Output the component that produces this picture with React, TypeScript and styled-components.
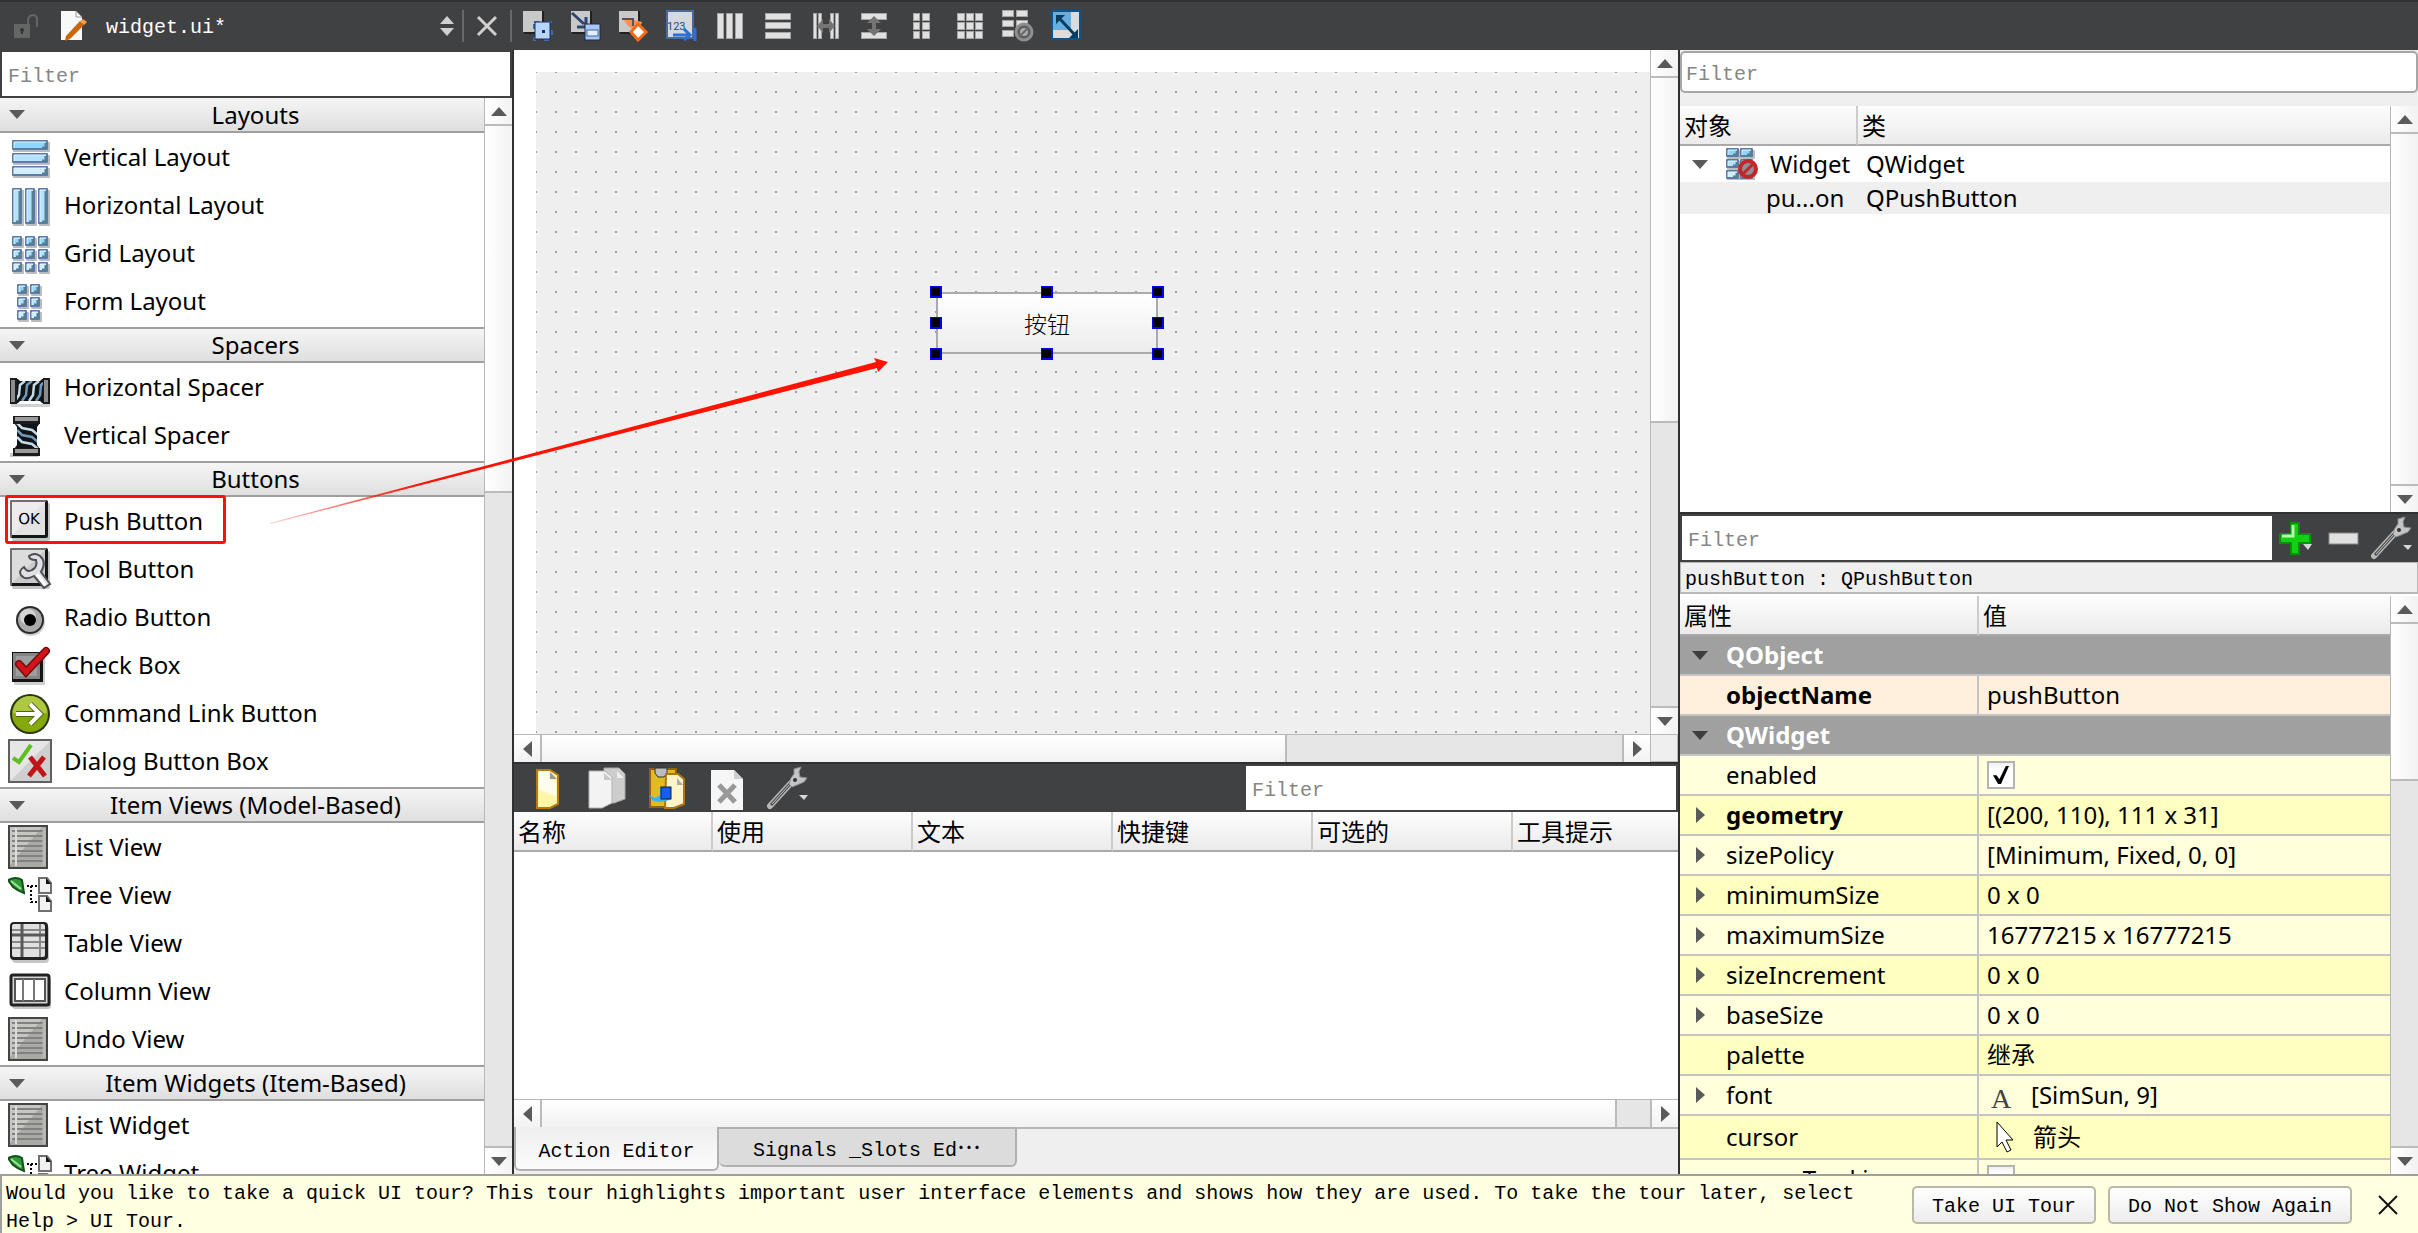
import React from "react";
import styled, { createGlobalStyle, css } from "styled-components";

const UI = `"Noto Sans", "Noto Sans CJK SC", sans-serif`;
const MONO = `"Liberation Mono", "Noto Sans CJK SC", monospace`;
const DARK = "#404142";
const DARKER = "#2f3031";

const Global = createGlobalStyle`
  *, *::before, *::after { box-sizing: border-box; }
  body { margin: 0; background: #efefef; overflow: hidden; }
  button, input, select { font: inherit; color: inherit; margin: 0; padding: 0; border: 0; border-radius: 0; background: none; }
  svg { display: block; flex: none; }
`;

const Page = styled.div`
  position: relative;
  display: grid;
  grid-template-rows: 50px minmax(0, 1fr) auto;
  height: 100vh;
  font: 24px/32px ${UI};
  color: #000;
`;

/* ---------- top bar ---------- */
const TopBar = styled.header`
  display: flex;
  background: ${DARK};
  border-top: 2px solid ${DARKER};
`;
const DocBar = styled.div`
  display: flex;
  align-items: center;
  width: 512px;
  padding-left: 12px;
  gap: 8px;
`;
const DocSelect = styled.select`
  appearance: none;
  flex: 1;
  padding: 4px 0 0 8px;
  font: 20px/28px ${MONO};
  color: #fff;
`;
const BarButton = styled.button`
  display: grid;
  place-items: center;
  min-height: 32px;
`;
const CloseBox = styled(BarButton)`
  width: 50px;
  border-left: 2px solid #68696a;
  border-right: 2px solid #68696a;
`;
const Tools = styled.nav`
  display: flex;
  align-items: center;
  gap: 16px;
  padding-left: 10px;
`;

/* ---------- shared ---------- */
const Workspace = styled.main`
  display: grid;
  grid-template-columns: 512px minmax(0, 1fr) 738px;
  grid-template-rows: minmax(0, 1fr);
  gap: 2px;
  min-height: 0;
  overflow: hidden;
  background: ${DARKER};
`;
const Filter = styled.input`
  display: block;
  width: 100%;
  height: 44px;
  padding: 4px 6px 0;
  background: #fff;
  font: 20px/28px ${MONO};
  &::placeholder { color: #858585; opacity: 1; }
`;
const BarFrame = styled.div<{ $v?: boolean }>`
  display: flex;
  flex: none;
  background: #e6e6e6;
  ${(p) =>
    p.$v
      ? css`flex-direction: column; width: 28px; border-left: 1px solid #b8b8b8;`
      : css`height: 28px; border-top: 1px solid #b8b8b8;`}
`;
const BarEnd = styled.button<{ $v?: boolean; $last?: boolean }>`
  display: grid;
  place-items: center;
  flex: none;
  ${(p) => (p.$v ? "height: 28px;" : "width: 28px;")}
  background: linear-gradient(${(p) => (p.$v ? "to right" : "to bottom")}, #fff, #f2f2f2);
  border: 0 solid #bbb;
  ${(p) =>
    p.$v
      ? p.$last ? "border-top-width: 2px;" : "border-bottom-width: 2px;"
      : p.$last ? "border-left-width: 2px;" : "border-right-width: 2px;"}
`;
const Thumb = styled.div<{ $v?: boolean; $size: number }>`
  flex: 0 1 ${(p) => p.$size}%;
  background: linear-gradient(${(p) => (p.$v ? "to right" : "to bottom")}, #fff, #f2f2f2);
  border: 0 solid #bbb;
  ${(p) => p.$size < 100 && (p.$v ? "border-bottom-width: 2px;" : "border-right-width: 2px;")}
`;
const Track = styled.div<{ $v?: boolean }>`
  display: flex;
  flex: 1;
  min-height: 0;
  flex-direction: ${(p) => (p.$v ? "column" : "row")};
`;

const tri = { up: "0,9 8,0 16,9", down: "0,0 16,0 8,9", left: "9,0 9,16 0,8", right: "0,0 9,8 0,16" };
const Tri = ({ d, c = "#5a5a5a" }: { d: keyof typeof tri; c?: string }) => {
  const flat = d === "up" || d === "down";
  return (
    <svg width={flat ? 16 : 9} height={flat ? 9 : 16} aria-hidden="true">
      <polygon points={tri[d]} fill={c} />
    </svg>
  );
};
const ScrollBar = ({ v, size }: { v?: boolean; size: number }) => (
  <BarFrame $v={v}>
    <BarEnd $v={v} aria-label="Scroll back"><Tri d={v ? "up" : "left"} /></BarEnd>
    <Track $v={v}><Thumb $v={v} $size={size} /></Track>
    <BarEnd $v={v} $last aria-label="Scroll forward"><Tri d={v ? "down" : "right"} /></BarEnd>
  </BarFrame>
);

/* ---------- widget box ---------- */
const Column = styled.section`
  display: flex;
  flex-direction: column;
  min-width: 0;
  min-height: 0;
  overflow: hidden;
  background: #fff;
`;
const FilterFrame = styled.div`
  padding: 2px;
  background: ${DARK};
`;
const Split = styled.div`
  display: flex;
  flex: 1;
  min-height: 0;
`;
const BoxList = styled.div`
  flex: 1;
  min-width: 0;
  overflow: hidden;
`;
const Group = styled.div`
  padding-bottom: 2px;
`;
const GroupHead = styled.button<{ $first?: boolean }>`
  display: grid;
  grid-template-columns: 18px 1fr;
  align-items: center;
  width: 100%;
  height: ${(p) => (p.$first ? 35 : 36)}px;
  padding: 0 0 0 9px;
  border: solid #9f9f9f;
  border-width: ${(p) => (p.$first ? 0 : 2)}px 0 2px;
  background: linear-gradient(#f5f5f5, #dfdfdf);
  line-height: 28px;
`;
const BoxItem = styled.button<{ $marked?: boolean }>`
  position: relative;
  display: flex;
  align-items: center;
  gap: 12px;
  width: 100%;
  height: 48px;
  padding-left: 8px;
  text-align: left;
  ${(p) =>
    p.$marked &&
    css`
      &::after {
        content: "";
        position: absolute;
        left: 5px;
        top: -2px;
        width: 221px;
        height: 49px;
        border: 3px solid #ff1200;
        border-radius: 3px;
      }
    `}
`;

/* ---------- form canvas ---------- */
const Centre = styled.div`
  display: grid;
  grid-template-rows: minmax(0, 712fr) minmax(0, 412fr);
  min-width: 0;
  min-height: 0;
`;
const Canvas = styled.div`
  flex: 1;
  min-width: 0;
  padding: 22px 0 0 22px;
  background: #fff;
`;
const Form = styled.div`
  position: relative;
  height: 100%;
  background: conic-gradient(at 2px 2px, transparent 270deg, #9f9f9f 0) -1px -1px / 20px 20px #efefef;
`;
const Selected = styled.div`
  position: absolute;
  left: 400px;
  top: 220px;
  width: 222px;
  height: 62px;
`;
const FormButton = styled.button`
  width: 100%;
  height: 100%;
  border: 2px solid #aaa;
  background: linear-gradient(#fff, #ededed);
  font: 300 23px/32px "Noto Sans CJK SC", sans-serif;
`;
const Grip = styled.i<{ $x: number; $y: number }>`
  position: absolute;
  left: ${(p) => p.$x}%;
  top: ${(p) => p.$y}%;
  width: 12px;
  height: 12px;
  margin: -6px;
  background: #000;
  border: 2px solid #00f;
  border-width: 1px 2px 2px 1px;
`;
const CanvasFoot = styled.div`
  display: flex;
  flex: none;
`;
const Corner = styled.div`
  width: 28px;
  border: 1px solid #b8b8b8;
  background: #efefef;
`;
const Grow = styled.div`
  flex: 1;
  min-width: 0;
  min-height: 0;
  overflow: hidden;
`;

/* ---------- action editor ---------- */
const DarkBar = styled.div`
  display: flex;
  align-items: center;
  height: 50px;
  flex: none;
  padding: 0 2px;
  border-top: 2px solid ${DARKER};
  background: ${DARK};
`;
const ActionTools = styled.div`
  display: flex;
  flex: 1;
  gap: 16px;
  padding-left: 10px;
`;
const FilterSlot = styled.div<{ $w?: number }>`
  ${(p) => (p.$w ? `width: ${p.$w}px;` : "flex: 1;")}
`;
const Grid = styled.table`
  width: 100%;
  table-layout: fixed;
  border-collapse: separate;
  border-spacing: 0;
`;
const Th = styled.th<{ $w?: number }>`
  ${(p) => p.$w && `width: ${p.$w}px;`}
  height: 40px;
  padding: 2px 0 0 4px;
  overflow: hidden;
  text-align: left;
  font-weight: 400;
  white-space: nowrap;
  background: linear-gradient(#fdfdfd, #ebebeb);
  border-bottom: 2px solid #aaa;
  border-right: 2px solid #ccc;
  &:last-child { border-right: 0; }
`;
const Tabs = styled.div`
  display: flex;
  align-items: flex-start;
  height: 47px;
  flex: none;
  background: #efefef;
`;
const TabRest = styled.div`
  flex: 1;
  height: 2px;
  background: #b8b8b8;
`;
const Tab = styled.button<{ $on?: boolean }>`
  height: ${(p) => (p.$on ? 44 : 40)}px;
  width: ${(p) => (p.$on ? 205 : 298)}px;
  padding-top: ${(p) => (p.$on ? 8 : 4)}px;
  border: 2px solid #b0b0b0;
  border-top-width: ${(p) => (p.$on ? 0 : 2)}px;
  border-left-width: ${(p) => (p.$on ? 2 : 0)}px;
  border-radius: 0 0 6px 6px;
  background: ${(p) => (p.$on ? "linear-gradient(#efefef, #fbfbfb)" : "#dcdcdc")};
  font: 20px/28px ${MONO};
  white-space: nowrap;
`;
const Dots = styled.span`
  font: 24px/24px "Noto Sans CJK SC", sans-serif;
`;

/* ---------- right side ---------- */
const Right = styled.div`
  display: grid;
  grid-template-rows: minmax(0, 462fr) minmax(0, 662fr);
  min-width: 0;
  min-height: 0;
`;
const InspectorFilter = styled.div`
  padding: 1px 0 13px;
  background: #efefef;
  ${Filter} {
    height: 42px;
    padding: 4px 4px 0;
    border: 2px solid #a6a6a6;
    border-radius: 5px;
  }
`;
const TreeCell = styled.td<{ $shade?: boolean; $tall?: boolean }>`
  height: ${(p) => (p.$tall ? 36 : 32)}px;
  padding: 0 0 0 8px;
  background: ${(p) => (p.$shade ? "#efefef" : "#fff")};
  white-space: nowrap;
`;
const TreeNode = styled.div<{ $indent: number }>`
  display: flex;
  align-items: center;
  gap: 12px;
  height: 32px;
  padding-left: ${(p) => p.$indent}px;
  svg + svg { margin-left: 6px; }
`;
const ObjectLabel = styled.div`
  height: 32px;
  flex: none;
  margin-bottom: 2px;
  padding: 4px 0 0 4px;
  border: 1px solid #b8b8b8;
  border-bottom-width: 2px;
  background: #efefef;
  font: 20px/26px ${MONO};
`;
const PropRow = styled.tr<{ $bg: string; $group?: boolean; $tall?: boolean }>`
  height: ${(p) => (p.$tall ? 44 : 40)}px;
  background: ${(p) => p.$bg};
  color: ${(p) => (p.$group ? "#fff" : "#000")};
  td, th {
    padding: 0 0 0 8px;
    border-bottom: 2px solid #c4c4c4;
    text-align: left;
    white-space: nowrap;
  }
`;
const NameCell = styled.th<{ $bold?: boolean; $group?: boolean }>`
  font-weight: ${(p) => (p.$bold ? 700 : 400)};
  border-right: ${(p) => (p.$group ? "0" : "2px solid #c4c4c4")};
`;
const NameLine = styled.div`
  display: grid;
  grid-template-columns: 38px 1fr;
  align-items: center;
  svg { margin-left: 8px; }
  svg[width="16"] { margin-left: 4px; }
`;
const ValueLine = styled.div`
  display: flex;
  align-items: center;
  gap: 16px;
`;
const Check = styled.input`
  appearance: none;
  position: relative;
  width: 28px;
  height: 28px;
  border: 2px solid #b4b4b4;
  background: linear-gradient(#f0f0f0, #fff 6px);
  &:checked::after {
    content: "";
    position: absolute;
    inset: 3px 4px;
    background: #000;
    clip-path: polygon(0 52%, 22% 52%, 40% 74%, 80% 0, 100% 0, 50% 100%, 32% 100%);
  }
`;

/* ---------- tour bar ---------- */
const TourBar = styled.footer`
  display: flex;
  align-items: flex-start;
  height: 59px;
  padding: 0 4px;
  border-top: 2px solid #9f9f9f;
  border-left: 2px solid #9f9f9f;
  background: #ffffe1;
  font: 20px/28px ${MONO};
`;
const TourText = styled.p`
  flex: 1;
  margin: 0;
  padding-top: 4px;
  line-height: 28px;
`;
const TourButtons = styled.div`
  display: flex;
  align-items: center;
  gap: 12px;
  padding: 10px 12px 0 12px;
`;
const TourButton = styled.button`
  height: 38px;
  padding: 4px 18px 0;
  border: 2px solid #b9b9a8;
  border-radius: 5px;
  background: linear-gradient(#fff, #ededed);
`;
const TourClose = styled.button`
  display: grid;
  place-items: center;
  width: 28px;
  height: 38px;
  margin-left: 10px;
`;
const Pointer = styled.svg`
  position: absolute;
  left: 270px;
  top: 354px;
  pointer-events: none;
`;

/* ---------- icons ---------- */
const Box = ({ s = 44, children }: { s?: number; children: React.ReactNode }) => (
  <svg width={s} height={s} viewBox={`0 0 ${s} ${s}`} aria-hidden="true">{children}</svg>
);
const blues = ["#8fd6ff", "#b3e2ff", "#d2eeff"];
const Blue = ({ x, y, w, h, k }: { x: number; y: number; w: number; h: number; k: number }) => (
  <>
    <rect x={x + 1} y={y + 2} width={w + 1} height={h} rx="1" fill="#b9bcc0" />
    <rect x={x} y={y} width={w} height={h} rx="1" fill="#5d7ba3" />
    <rect x={x + 2} y={y + 2} width={w - 4} height={h - 4} fill={blues[k]} />
    <path d={`M${x + 2} ${y + h - 2}V${y + 2}H${x + w - 2}`} fill="none" stroke="#e2f6ff" />
    <path d={`M${x + w - 2.5} ${y + 3}V${y + h - 2.5}H${x + w - 6}`} fill="none" stroke="#56808f" strokeWidth="2" />
  </>
);
const at = [4, 17, 30];
const VLay = () => <Box>{at.map((p, i) => <Blue key={p} x={4} y={p + 1} w={36} h={10} k={i} />)}</Box>;
const HLay = () => <Box>{at.map((p) => <Blue key={p} x={p} y={5} w={10} h={36} k={1} />)}</Box>;
const GLay = () => <Box>{at.map((y, i) => at.map((x) => <Blue key={x + "-" + y} x={x} y={y + 1} w={10} h={10} k={i} />))}</Box>;
const FLay = () => <Box>{at.map((y, i) => [9, 22].map((x) => <Blue key={x + "-" + y} x={x} y={y + 1} w={10} h={10} k={i} />))}</Box>;
const HSpring = () => (
  <Box>
    <rect x="3" y="38" width="39" height="4" fill="#d0d0d0" />
    <path d="M8 14H36V38H8Z" fill="#101418" />
    {[0, 7, 14, 21].map((d) => <path key={d} d={`M${7 + d} 36L${11 + d} 30L${12 + d} 20L${17 + d} 16`} stroke={d % 2 ? "#6f9ab8" : "#c4dbe8"} strokeWidth="2.5" fill="none" />)}
    <path d="M9 13H35L32 16H12ZM9 39H35L32 36H12Z" fill="#fff" />
    {[2, 35].map((x) => <g key={x}><rect x={x} y="13" width="7" height="26" fill="#1c1c1c" /><rect x={x + 1} y="15" width="4" height="22" fill="#8c8c8c" /></g>)}
  </Box>
);
const VSpring = () => (
  <Box>
    <rect x="2" y="40" width="28" height="4" fill="#c8c8c8" />
    <path d="M7 9H31V37H7Z" fill="#101418" />
    {[0, 7, 14].map((d) => <path key={d} d={`M9 ${10 + d}L14 ${15 + d}L24 ${17 + d}L30 ${22 + d}`} stroke={d % 2 ? "#6f9ab8" : "#c4dbe8"} strokeWidth="2.5" fill="none" />)}
    <path d="M6 10V36L9 32V14ZM32 10V36L29 32V14Z" fill="#fff" />
    {[3, 35].map((y) => <g key={y}><rect x="5" y={y} width="27" height="8" fill="#1c1c1c" /><rect x="7" y={y + 1} width="23" height="4" fill="#9a9a9a" /></g>)}
  </Box>
);
const Plate = ({ dark }: { dark?: boolean }) => (
  <>
    <rect x="4" y="4" width="38" height="38" rx="2" fill="#c4c4c4" />
    <rect x="2" y="1" width="38" height="38" rx="2" fill="#161616" />
    <path d="M2 38V3Q2 1 4 1H38V3H4V38Z" fill="#707070" />
    <rect x="4" y="3" width="33" height="33" fill={dark ? "#c9c9c9" : "#e2e2e2"} />
    <path d="M4 3H37L4 36Z" fill="#fff" opacity=".35" />
  </>
);
const PushIcon = () => <Box><Plate /><text x="21" y="25" textAnchor="middle" fontFamily="DejaVu Sans" fontSize="15" textRendering="geometricPrecision">OK</text></Box>;
const ToolIcon = () => (
  <Box>
    <Plate dark />
    <path d="M28 13Q30 20 24 23Q19 26 16 20Q10 24 13 28Q17 34 26 29L36 41L42 37L33 25Q39 15 32 9Q27 5 21 9Q21 13 28 13Z" fill="#dfe1e6" stroke="#4e4e55" strokeWidth="2" />
    <path d="M29 27L37 38" stroke="#fff" strokeWidth="3" />
  </Box>
);
const RadioIcon = () => (
  <Box>
    <circle cx="23" cy="27" r="14" fill="#cfcfcf" /><circle cx="22" cy="25" r="14" fill="#2b2b2b" />
    <circle cx="22" cy="25" r="12" fill="#a9a9a9" /><circle cx="20" cy="22" r="8" fill="#d4d4d4" /><circle cx="22" cy="25" r="6" fill="#000" />
  </Box>
);
const CheckIcon = () => (
  <Box>
    <rect x="6" y="12" width="31" height="30" fill="#cfcfcf" /><rect x="4" y="9" width="31" height="30" fill="#151515" />
    <rect x="5" y="10" width="27" height="26" fill="#858585" /><rect x="8" y="13" width="21" height="20" fill="#9d9d9d" />
    <path d="M11 21L18 29L38 8" fill="none" stroke="#6d1010" strokeWidth="8" strokeLinecap="round" />
    <path d="M11 21L18 29L38 8" fill="none" stroke="#d5121b" strokeWidth="5" strokeLinecap="round" />
  </Box>
);
const LinkIcon = () => (
  <Box>
    <circle cx="22" cy="23" r="20" fill="#2d3410" /><circle cx="22" cy="23" r="18" fill="#85a80b" />
    <path d="M5 22A17 17 0 0 1 39 22Q22 27 5 22Z" fill="#b6cf4f" opacity=".8" />
    <path d="M8 23H31M22 13L32 23L22 33" fill="none" stroke="#4e6408" strokeWidth="6" /><path d="M8 23H31M22 13L32 23L22 33" fill="none" stroke="#fff" strokeWidth="4" />
  </Box>
);
const DialogIcon = () => (
  <Box>
    <rect x="1" y="1" width="42" height="42" fill="#cfcfcf" stroke="#606060" strokeWidth="2" /><path d="M2 2H42L2 42Z" fill="#e6e6e6" />
    <path d="M5 19L11 23L23 6" fill="none" stroke="#5fbe22" strokeWidth="4" />
    <path d="M22 18L37 37M36 18L21 37" stroke="#c01418" strokeWidth="5" />
  </Box>
);
const ListIcon = () => (
  <Box>
    <rect x="1" y="1" width="38" height="42" fill="#a9a9a6" stroke="#454545" strokeWidth="2" /><path d="M2 2H34L2 40Z" fill="#c6c6c2" />
    {[6, 11, 16, 21, 26, 31, 36].map((y) => <path key={y} d={`M4 ${y}H35`} stroke="#81817f" strokeWidth="2" />)}
    <path d="M8 3V41" stroke="#dcdcd8" strokeWidth="2" /><path d="M36 3V41" stroke="#b9b9b5" strokeWidth="3" />
  </Box>
);
const TreeIcon = () => (
  <Box>
    <path d="M0 7Q8 3 14 7L16 20Q10 18 5 14Z" fill="#2f9a35" stroke="#12521a" strokeWidth="2" /><path d="M3 8L13 16" stroke="#9fe09c" strokeWidth="2" />
    <path d="M19 13H29M23 13V30M23 29H29" fill="none" stroke="#000" strokeWidth="2" strokeDasharray="2 2" />
    {[5, 23].map((y) => <g key={y}><path d={`M31 ${y}H39L43 ${y + 5}V${y + 15}H31Z`} fill="#f1f1f1" stroke="#707070" strokeWidth="2" /><path d={`M38 ${y}L43 ${y + 6}H38Z`} fill="#111" /></g>)}
  </Box>
);
const TableIcon = () => (
  <Box>
    <rect x="4" y="4" width="37" height="38" rx="4" fill="#c6c6c6" /><rect x="2" y="1" width="38" height="38" rx="4" fill="#222" />
    <rect x="4" y="3" width="33" height="33" rx="2" fill="#e0e0e0" />
    <path d="M4 9H37M4 21H37M4 27H37M32 3V36" stroke="#888" strokeWidth="2" /><path d="M4 14H37M14 3V36" stroke="#585858" strokeWidth="3" />
  </Box>
);
const ColumnIcon = () => (
  <Box>
    <rect x="4" y="8" width="39" height="32" rx="3" fill="#c6c6c6" /><rect x="3" y="6" width="38" height="30" rx="2" fill="#d5d5d5" stroke="#222" strokeWidth="3" />
    <rect x="7" y="10" width="30" height="22" fill="#fff" stroke="#555" strokeWidth="2" /><path d="M15 10V32M26 10V32" stroke="#777" strokeWidth="2" />
  </Box>
);

const Tile = () => <><rect x="2" y="1" width="20" height="23" fill="#1f2021" /><rect x="1" y="1" width="19" height="21" fill="#c9c9c9" /></>;
const Lights = ({ r }: { r: number[][] }) => (
  <>{r.map(([x, y, w, h]) => <g key={`${x} ${y}`}><rect x={x} y={y} width={w} height={h} fill="#a5a5a5" /><rect x={x + 1} y={y + 1} width={w - 2} height={h - 2} fill="#e0e0e0" /></g>)}</>
);
const barIcons: [string, React.ReactNode][] = [
  ["Edit Widgets", <><Tile /><rect x="12" y="12" width="18" height="18" fill="none" stroke="#3f6cab" strokeDasharray="5 8" strokeWidth="2" /><rect x="13" y="12" width="15" height="17" fill="#b9d4fa" stroke="#16315e" /><rect x="20" y="20" width="3" height="3" fill="#16315e" /></>],
  ["Edit Signals", <><Tile /><path d="M2 3L14 14M16 7V17H7" stroke="#2d4672" strokeWidth="3" fill="none" /><rect x="15" y="14" width="15" height="16" fill="#a9c8f8" stroke="#1d2a44" /><rect x="17" y="20" width="11" height="6" fill="#e3eeff" stroke="#45679c" /></>],
  ["Edit Buddies", <><Tile /><path d="M5 9H12L24 12L20 22L10 16Z" fill="#ff8d58" /><path d="M4 9H15V16" fill="none" stroke="#555" strokeWidth="2" /><path d="M20 14L28 22L20 30L13 22Z" fill="#fff" stroke="#f36b15" strokeWidth="3" /></>],
  ["Edit Tab Order", <><rect x="1" y="1" width="26" height="27" fill="#d5d8dd" stroke="#476ba0" strokeWidth="2" /><text x="1" y="20" fontFamily="Roboto" fontSize="11" fill="#1c4d94">123</text><path d="M7 25H22M18 19L24 25L18 30" stroke="#2c6fd6" strokeWidth="3" fill="none" /><path d="M29 18V31" stroke="#2c6fd6" strokeWidth="3" /></>],
  ["Lay Out Horizontally", <Lights r={[[3, 3, 7, 26], [12, 3, 7, 26], [21, 3, 8, 26]]} />],
  ["Lay Out Vertically", <Lights r={[[3, 3, 26, 7], [3, 12, 26, 7], [3, 22, 26, 7]]} />],
  ["Horizontal Splitter", <><Lights r={[[3, 3, 4, 26], [8, 3, 4, 26], [20, 3, 4, 26], [25, 3, 4, 26]]} /><path d="M7 16L13 9V14H19V9L25 16L19 23V18H13V23Z" fill="#747474" /></>],
  ["Vertical Splitter", <><Lights r={[[3, 3, 26, 7], [3, 22, 26, 7]]} /><path d="M16 6L23 13H18V19H23L16 26L9 19H14V13H9Z" fill="#747474" /></>],
  ["Form Layout", <Lights r={[3, 12, 21].flatMap((y) => [[7, y, 7, 8], [16, y, 8, 8]])} />],
  ["Grid Layout", <Lights r={[3, 12, 21].flatMap((y) => [[3, y, 8, 8], [12, y, 8, 8], [21, y, 8, 8]])} />],
  ["Break Layout", <><Lights r={[[0, 0, 12, 7], [14, 0, 12, 7], [0, 10, 12, 7], [14, 10, 12, 7], [0, 20, 12, 7]]} /><circle cx="22" cy="22" r="8" fill="#5d5d5d" stroke="#8f8f8f" strokeWidth="3" /><circle cx="22" cy="22" r="4" fill="#a9a9a9" /><path d="M17 27L27 17" stroke="#6a6a6a" strokeWidth="2" /></>],
  ["Adjust Size", <><rect x="2" y="1" width="28" height="28" fill="#dcdcdc" stroke="#0c548e" strokeWidth="2" /><rect x="3" y="2" width="18" height="18" fill="#6aaede" /><path d="M9 8L25 25" stroke="#063c5c" strokeWidth="3" /><path d="M6 5H15L6 14ZM28 28H19L28 19Z" fill="#063c5c" /></>],
];

const Wrench = ({ s = 44 }: { s?: number }) => (
  <svg width={s} height={44} viewBox="0 0 44 44" aria-hidden="true">
    <path d="M4 40L25 17" stroke="#b9b9b9" strokeWidth="6" strokeLinecap="round" /><path d="M5 39L24 18" stroke="#4c4c4c" strokeWidth="3" /><path d="M6 38L24 18" stroke="#c8c8c8" strokeWidth="1" />
    <path d="M23 18Q24 12 28 8L28 3L35 1L33 6L34 11L41 12L38 16L31 19L26 21Z" fill="#c4c4c4" stroke="#8b8b8b" /><circle cx="29" cy="14" r="2" fill="#333" />
    <path d="M33 29H42L38 34Z" fill="#d6d6d6" />
  </svg>
);
const NewIcon = () => <Box><path d="M11 4H24L32 9V38L24 42H11Z" fill="#fff6a8" stroke="#b47a14" strokeWidth="2" /><path d="M13 5H23V12L30 16V30L13 24Z" fill="#fffdf0" /><path d="M24 6V13H31Z" fill="#999" /></Box>;
const CopyIcon = () => <Box><path d="M18 2H33L39 8V33L28 37H18Z" fill="#cdcdcd" stroke="#a7a7a7" /><path d="M3 5H19L26 11V37L16 42H3Z" fill="#f3f3f3" stroke="#b2b2b2" /><path d="M18 7V14H26Z" fill="#c9c9c9" /><path d="M31 5V12H38Z" fill="#eee" /></Box>;
const PasteIcon = () => <Box><rect x="4" y="3" width="26" height="38" fill="#e3bb1e" stroke="#94620e" strokeWidth="2" /><path d="M9 2H21V7L18 11H12L9 7Z" fill="#bdbdbd" stroke="#333" /><path d="M20 8H32L38 13V38L28 42H19Z" fill="#fff4c8" stroke="#b07512" strokeWidth="2" /><path d="M31 12V19H37Z" fill="#aaa" /><path d="M3 29L9 32L14 29V21H24V34L14 36L7 35Z" fill="#36b5ee" /><rect x="15" y="21" width="10" height="12" fill="#155df0" stroke="#123" /></Box>;
const DeleteIcon = () => <Box><path d="M5 4H28L37 13V45H5Z" fill="#f6f6f6" /><path d="M28 4V13H37Z" fill="#cfcfcf" /><path d="M13 19L29 36M29 19L13 36" stroke="#999" strokeWidth="5" /></Box>;
const NoLayout = () => (
  <Box s={32}>
    {[0, 11, 22].map((y, i) => [0, 14].map((x) => <Blue key={x + "-" + y} x={x} y={y} w={13} h={9} k={i} />))}
    <circle cx="22" cy="21" r="10" fill="#c3262a" /><circle cx="22" cy="21" r="6" fill="#8d9096" /><path d="M17 26L27 16" stroke="#c3262a" strokeWidth="3" />
  </Box>
);

/* ---------- data ---------- */
const groups: { title: string; items: [string, React.FC][] }[] = [
  { title: "Layouts", items: [["Vertical Layout", VLay], ["Horizontal Layout", HLay], ["Grid Layout", GLay], ["Form Layout", FLay]] },
  { title: "Spacers", items: [["Horizontal Spacer", HSpring], ["Vertical Spacer", VSpring]] },
  { title: "Buttons", items: [["Push Button", PushIcon], ["Tool Button", ToolIcon], ["Radio Button", RadioIcon], ["Check Box", CheckIcon], ["Command Link Button", LinkIcon], ["Dialog Button Box", DialogIcon]] },
  { title: "Item Views (Model-Based)", items: [["List View", ListIcon], ["Tree View", TreeIcon], ["Table View", TableIcon], ["Column View", ColumnIcon], ["Undo View", ListIcon]] },
  { title: "Item Widgets (Item-Based)", items: [["List Widget", ListIcon], ["Tree Widget", TreeIcon]] },
];
const actions: [string, React.FC][] = [["New", NewIcon], ["Copy", CopyIcon], ["Paste", PasteIcon], ["Delete", DeleteIcon], ["Configure", Wrench]];
const grips = [[0, 0], [50, 0], [100, 0], [0, 50], [100, 50], [0, 100], [50, 100], [100, 100]];

type Prop = { name: string; value?: React.ReactNode; bold?: boolean; arrow?: boolean; group?: boolean; tall?: boolean; bg: string };
const G = "#a0a0a0", L = "#ffffdc", Y = "#ffffbf";
const props: Prop[] = [
  { name: "QObject", group: true, bg: G },
  { name: "objectName", value: "pushButton", bold: true, bg: "#fff0de" },
  { name: "QWidget", group: true, bg: G },
  { name: "enabled", value: <Check type="checkbox" defaultChecked aria-label="enabled" />, bg: L },
  { name: "geometry", value: "[(200, 110), 111 x 31]", bold: true, arrow: true, bg: Y },
  { name: "sizePolicy", value: "[Minimum, Fixed, 0, 0]", arrow: true, bg: L },
  { name: "minimumSize", value: "0 x 0", arrow: true, bg: Y },
  { name: "maximumSize", value: "16777215 x 16777215", arrow: true, bg: L },
  { name: "sizeIncrement", value: "0 x 0", arrow: true, bg: Y },
  { name: "baseSize", value: "0 x 0", arrow: true, bg: L },
  { name: "palette", value: "继承", bg: Y },
  { name: "font", value: <><Box s={28}><text x="14" y="27" textAnchor="middle" fontFamily="Liberation Serif" fontSize="28" fill="#444">A</text></Box>[SimSun, 9]</>, arrow: true, bg: L },
  { name: "cursor", value: <><svg width="30" height="34" aria-hidden="true"><path d="M10 2V27L15 22L20 32L24 30L19 20H26Z" fill="#fff" stroke="#000" strokeWidth="1" /></svg>箭头</>, tall: true, bg: Y },
  { name: "mouseTracking", value: <Check type="checkbox" aria-label="mouseTracking" />, bg: L },
];

export default function App() {
  return (
    <Page>
      <Global />
      <TopBar>
        <DocBar>
          <svg width="32" height="32" aria-hidden="true"><path d="M16 15V10Q17 5 21 5T25 10V17" fill="none" stroke="#646565" strokeWidth="2" /><rect x="2" y="14" width="16" height="14" fill="#646565" /><circle cx="10" cy="20" r="2" fill="#333" /><path d="M10 20V24" stroke="#333" strokeWidth="2" /></svg>
          <svg width="38" height="32" viewBox="-8 0 38 32" aria-hidden="true"><path d="M1 1H16L22 7V30H1Z" fill="#f8f8f8" /><path d="M16 1V7H22" fill="none" stroke="#999" /><path d="M5 31L6 26L20 11L24 15L10 29Z" fill="#c76706" /><path d="M20 11L23 9L27 12L24 15Z" fill="#f4a04d" /></svg>
          <DocSelect aria-label="Open document"><option>widget.ui*</option></DocSelect>
          <svg width="14" height="22" aria-hidden="true"><path d="M0 9L7 1L14 9ZM0 13H14L7 21Z" fill="#d0d0d0" /></svg>
          <CloseBox aria-label="Close document"><svg width="22" height="22"><path d="M2 2L20 20M20 2L2 20" stroke="#d0d0d0" strokeWidth="3" /></svg></CloseBox>
        </DocBar>
        <Tools aria-label="Form tools">
          {barIcons.map(([label, art]) => <BarButton key={label} aria-label={label}><Box s={32}>{art}</Box></BarButton>)}
        </Tools>
      </TopBar>

      <Workspace>
        <Column>
          <FilterFrame><Filter placeholder="Filter" aria-label="Filter widgets" /></FilterFrame>
          <Split>
            <BoxList>
              {groups.map((g, i) => (
                <Group key={g.title}>
                  <GroupHead $first={i === 0}><Tri d="down" /><span>{g.title}</span></GroupHead>
                  {g.items.map(([name, Icon]) => <BoxItem key={name} $marked={name === "Push Button"}><Icon />{name}</BoxItem>)}
                </Group>
              ))}
            </BoxList>
            <ScrollBar v size={36} />
          </Split>
        </Column>

        <Centre>
          <Column>
            <Split>
              <Canvas>
                <Form>
                  <Selected>
                    <FormButton>按钮</FormButton>
                    {grips.map(([x, y]) => <Grip key={`${x}-${y}`} $x={x} $y={y} />)}
                  </Selected>
                </Form>
              </Canvas>
              <ScrollBar v size={55} />
            </Split>
            <CanvasFoot><Grow><ScrollBar size={69} /></Grow><Corner /></CanvasFoot>
          </Column>
          <Column>
            <DarkBar>
              <ActionTools>
                {actions.map(([n, Icon]) => <BarButton key={n} aria-label={n}><Icon /></BarButton>)}
              </ActionTools>
              <FilterSlot $w={430}><Filter placeholder="Filter" aria-label="Filter actions" /></FilterSlot>
            </DarkBar>
            <Grow>
              <Grid>
                <thead><tr><Th $w={199}>名称</Th><Th $w={200}>使用</Th><Th $w={200}>文本</Th><Th $w={200}>快捷键</Th><Th $w={200}>可选的</Th><Th>工具提示</Th></tr></thead>
              </Grid>
            </Grow>
            <ScrollBar size={97} />
            <Tabs>
              <Tab $on>Action Editor</Tab>
              <Tab>Signals _Slots Ed<Dots lang="zh-CN">…</Dots></Tab>
              <TabRest />
            </Tabs>
          </Column>
        </Centre>

        <Right>
          <Column>
            <InspectorFilter><Filter placeholder="Filter" aria-label="Filter objects" /></InspectorFilter>
            <Split>
              <Grow>
                <Grid>
                  <thead><tr><Th $w={178}>对象</Th><Th>类</Th></tr></thead>
                  <tbody>
                    <tr><TreeCell $tall><TreeNode $indent={4}><Tri d="down" /><NoLayout />Widget</TreeNode></TreeCell><TreeCell $tall>QWidget</TreeCell></tr>
                    <tr><TreeCell $shade><TreeNode $indent={78}>pu...on</TreeNode></TreeCell><TreeCell $shade>QPushButton</TreeCell></tr>
                  </tbody>
                </Grid>
              </Grow>
              <ScrollBar v size={100} />
            </Split>
          </Column>
          <Column>
            <DarkBar>
              <FilterSlot><Filter placeholder="Filter" aria-label="Filter properties" /></FilterSlot>
              <BarButton aria-label="Add property"><svg width="48" height="44"><path d="M19 7H27V18H38V27H27V38H19V27H8V18H19Z" fill="#12d012" stroke="#0b8f0b" strokeWidth="2" /><path d="M21 9V20H10" fill="none" stroke="#b6ffae" strokeWidth="3" /><path d="M31 28H40L36 34Z" fill="#d6d6d6" /></svg></BarButton>
              <BarButton aria-label="Remove property"><svg width="48" height="44"><rect x="9" y="17" width="29" height="11" fill="#e0e0e0" stroke="#888" /></svg></BarButton>
              <BarButton aria-label="Configure properties"><Wrench s={48} /></BarButton>
            </DarkBar>
            <ObjectLabel>pushButton : QPushButton</ObjectLabel>
            <Split>
              <Grow>
                <Grid>
                  <thead><tr><Th $w={299}>属性</Th><Th>值</Th></tr></thead>
                  <tbody>
                    {props.map((p) => (
                      <PropRow key={p.name} $bg={p.bg} $group={p.group} $tall={p.tall}>
                        <NameCell colSpan={p.group ? 2 : 1} $group={p.group} $bold={p.bold || p.group}>
                          <NameLine>{p.group ? <Tri d="down" c="#3c3c3c" /> : p.arrow ? <Tri d="right" /> : <span />}<span>{p.name}</span></NameLine>
                        </NameCell>
                        {!p.group && <td><ValueLine>{p.value}</ValueLine></td>}
                      </PropRow>
                    ))}
                  </tbody>
                </Grid>
              </Grow>
              <ScrollBar v size={30} />
            </Split>
          </Column>
        </Right>
      </Workspace>

      <TourBar>
        <TourText>Would you like to take a quick UI tour? This tour highlights important user interface elements and shows how they are used. To take the tour later, select Help &gt; UI Tour.</TourText>
        <TourButtons>
          <TourButton>Take UI Tour</TourButton>
          <TourButton>Do Not Show Again</TourButton>
          <TourClose aria-label="Close"><svg width="22" height="22"><path d="M2 2L20 20M20 2L2 20" stroke="#111" strokeWidth="2" /></svg></TourClose>
        </TourButtons>
      </TourBar>

      <Pointer width="620" height="172" aria-hidden="true">
        <defs><linearGradient id="fade"><stop offset="0" stopColor="#ff1200" stopOpacity=".2" /><stop offset=".25" stopColor="#ff1200" /></linearGradient></defs>
        <polygon points="0,169 606,8 604,4 618,8 608,18 607,14 0,170" fill="url(#fade)" />
      </Pointer>
    </Page>
  );
}
